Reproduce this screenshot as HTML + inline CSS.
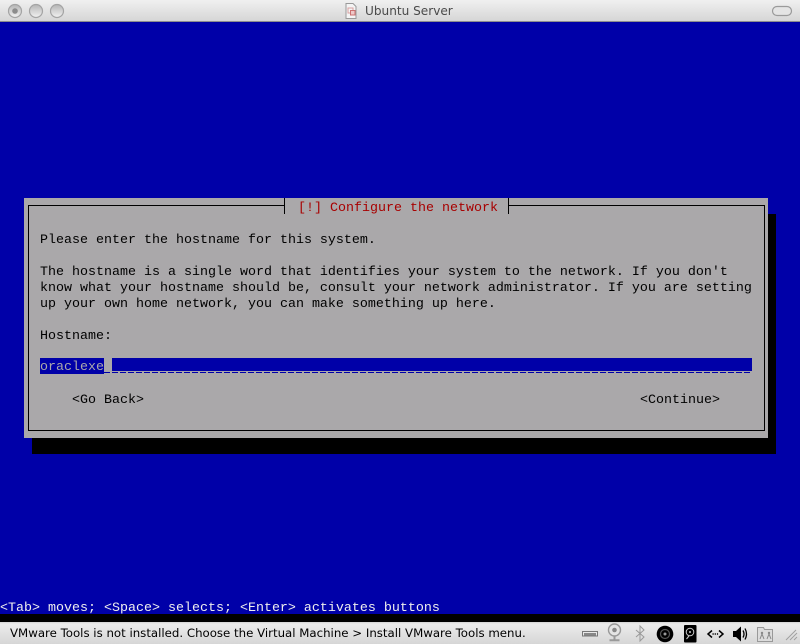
<!DOCTYPE html>
<html><head><meta charset="utf-8"><style>
html,body{margin:0;padding:0;width:800px;height:644px;overflow:hidden;background:#0000a8}
.a{position:absolute}
.t{position:absolute;font:13.333px/16px "Liberation Mono",monospace;white-space:pre;color:#000;height:16px}
#bar{left:0;top:0;width:800px;height:21px;background:linear-gradient(#f0f0f0,#d6d6d6);border-bottom:1px solid #8e8e8e}
#title{left:365px;top:3px;font:12.1px/16px "DejaVu Sans",sans-serif;color:#4a4a4a;white-space:pre}
#st{left:0;top:622px;width:800px;height:22px;background:linear-gradient(#d2d2d2 0,#ececec 2px,#d6d6d6 100%)}
#msg{left:10px;top:625px;font:11.78px/16px "DejaVu Sans",sans-serif;color:#000;white-space:pre}
</style></head><body>
<div class="a" id="bar"></div>
<svg class="a" style="left:0;top:0" width="800" height="22">
<defs><linearGradient id="g" x1="0" y1="0" x2="0" y2="1"><stop offset="0" stop-color="#b4b4b4"/><stop offset="1" stop-color="#f2f2f2"/></linearGradient></defs>
<g stroke="#a4a4a4" stroke-width="1.2" fill="url(#g)"><circle cx="15" cy="11" r="6.5"/><circle cx="36" cy="11" r="6.5"/><circle cx="57" cy="11" r="6.5"/></g>
<circle cx="15" cy="11" r="2.8" fill="#8c8c8c"/>
<rect x="772.5" y="6.5" width="19" height="9" rx="4.5" fill="#e4e4e4" stroke="#9a9a9a" stroke-width="1.2"/>
<path d="M346 3.5h7l3 3v12h-10z" fill="#f4f4f4" stroke="#999"/>
<rect x="348" y="8" width="5" height="5" fill="none" stroke="#d8a0a0" stroke-width="1"/>
<rect x="350.500" y="10.500" width="4.500" height="4.500" fill="#eec8c8" stroke="#cc7070"/>
</svg>
<div class="a" id="title">Ubuntu Server</div>

<div class="a" style="left:768px;top:214px;width:8px;height:240px;background:#000"></div>
<div class="a" style="left:32px;top:438px;width:744px;height:16px;background:#000"></div>
<div class="a" style="left:24px;top:198px;width:744px;height:240px;background:#aaa8aa"></div>
<div class="a" style="left:28px;top:205px;width:735px;height:224px;border:1px solid #000"></div>
<div class="a" style="left:284px;top:198px;width:224px;height:16px;background:#aaa8aa"></div>
<div class="a" style="left:284px;top:198px;width:1px;height:16px;background:#000"></div>
<div class="a" style="left:508px;top:198px;width:1px;height:16px;background:#000"></div>

<div class="t" style="left:298px;top:201px;color:#a80000">[!] Configure the network</div>
<div class="t" style="left:40px;top:233px">Please enter the hostname for this system.</div>
<div class="t" style="left:40px;top:265px">The hostname is a single word that identifies your system to the network. If you don't</div>
<div class="t" style="left:40px;top:281px">know what your hostname should be, consult your network administrator. If you are setting</div>
<div class="t" style="left:40px;top:297px">up your own home network, you can make something up here.</div>
<div class="t" style="left:40px;top:329px">Hostname:</div>

<div class="a" style="left:40px;top:358px;width:64px;height:16px;background:#0000a8"></div>
<div class="a" style="left:112px;top:358px;width:640px;height:13px;background:#0000a8"></div>
<div class="a" style="left:104px;top:372px;width:648px;height:1px;background:repeating-linear-gradient(90deg,#0000a8 0 6px,#aaa8aa 6px 8px)"></div>
<div class="t" style="left:40px;top:360px;color:#aaa8aa">oraclexe</div>

<div class="t" style="left:72px;top:393px">&lt;Go Back&gt;</div>
<div class="t" style="left:640px;top:393px">&lt;Continue&gt;</div>

<div class="t" style="left:0;top:601px;color:#eee">&lt;Tab&gt; moves; &lt;Space&gt; selects; &lt;Enter&gt; activates buttons</div>
<div class="a" style="left:0;top:614px;width:800px;height:8px;background:#000"></div>

<div class="a" id="st"></div>
<div class="a" id="msg">VMware Tools is not installed. Choose the Virtual Machine &gt; Install VMware Tools menu.</div>
<svg class="a" style="left:570px;top:622px" width="230" height="22">
<!-- usb -->
<rect x="12.500" y="9.500" width="15" height="4.500" fill="#e8e8e8" stroke="#777"/>
<rect x="14" y="11" width="12" height="2.500" fill="#888"/>
<!-- webcam -->
<circle cx="44.500" cy="8" r="6" fill="#e4e4e4" stroke="#999" stroke-width="1.400"/>
<circle cx="44.500" cy="8" r="2.300" fill="#888"/>
<path d="M44.500 14v4M39.500 18.300h10" stroke="#999" stroke-width="2" fill="none"/>
<!-- bluetooth -->
<path d="M66 8l8 7-4 4V4l4 4-8 7" fill="none" stroke="#999" stroke-width="1"/>
<!-- cd -->
<circle cx="95" cy="12" r="8.300" fill="#000"/>
<circle cx="95" cy="12" r="4.500" fill="none" stroke="#555" stroke-width="1.200"/>
<circle cx="95" cy="12" r="1.500" fill="#999"/>
<!-- hdd -->
<rect x="114" y="3" width="12.500" height="17.500" rx="1" fill="#000"/>
<circle cx="120" cy="10" r="3.800" fill="none" stroke="#ccc" stroke-width="1"/>
<circle cx="120" cy="10" r="1" fill="#ccc"/>
<path d="M116.500 17l2.500-3" stroke="#ccc" stroke-width="1"/>
<!-- network -->
<path d="M142 8.500l-4 3.500 4 3.500M149 8.500l4 3.500-4 3.500" fill="none" stroke="#000" stroke-width="1.500"/>
<path d="M142.500 12h6" stroke="#000" stroke-width="1.600" stroke-dasharray="1.200 1"/>
<!-- speaker -->
<path d="M163 9h3l5-4.500v15L166 15h-3z" fill="#000"/>
<path d="M173 8.500q2 3.500 0 7M175 6.500q3 5.500 0 11" fill="none" stroke="#000" stroke-width="1.300"/>
<!-- folder -->
<path d="M187.500 19.500V5.500h6l1 2h8v12z" fill="#dcdcdc" stroke="#999"/>
<path d="M190 17l2-5 2 5M197 17l2-5 2 5" fill="none" stroke="#888" stroke-width="1"/>
<circle cx="192" cy="11" r="1.200" fill="#888"/><circle cx="199" cy="11" r="1.200" fill="#888"/>
<!-- grip -->
<path d="M216 18l10-10M220 18l7-7M224 18l3-3" stroke="#a0a0a0" stroke-width="1" fill="none"/>
</svg>
</body></html>
